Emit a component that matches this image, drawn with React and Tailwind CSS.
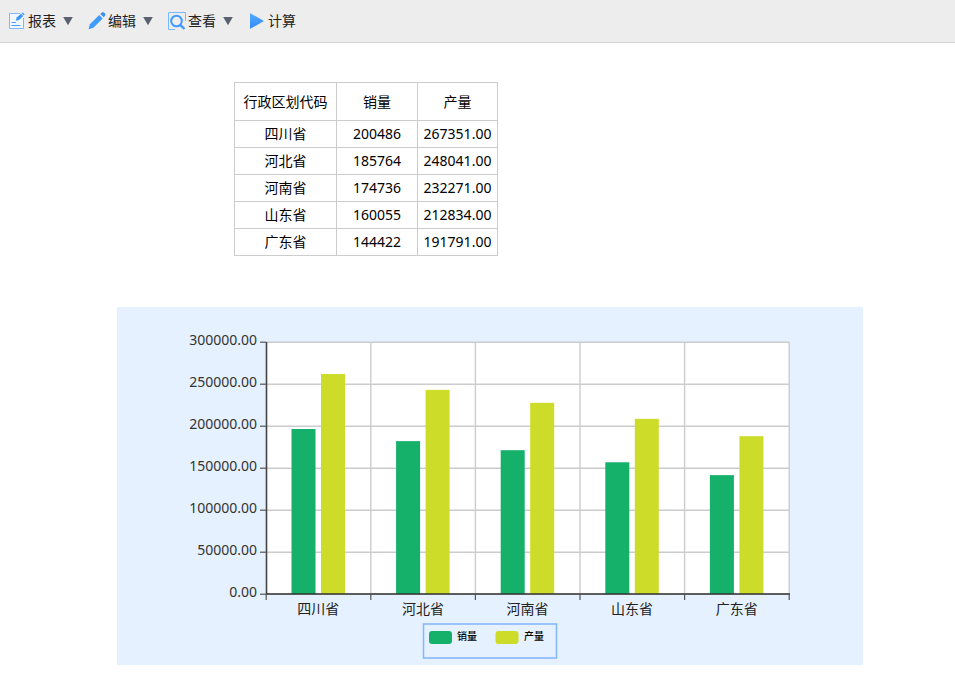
const rows = [
  { name: '四川省', sales: 200486, output: 267351 },
  { name: '河北省', sales: 185764, output: 248041 },
  { name: '河南省', sales: 174736, output: 232271 },
  { name: '山东省', sales: 160055, output: 212834 },
  { name: '广东省', sales: 144422, output: 191791 },
];

const ticks = [300000, 250000, 200000, 150000, 100000, 50000, 0];

// Plot area inside the 746x358 chart canvas
const plot = { left: 149, right: 672, top: 35, bottom: 287 };
const colWidth = (plot.right - plot.left) / rows.length;
const barScale = 0.000823;

function ReportIcon() {
  return (
    <svg width="18" height="18" viewBox="0 0 18 18" fill="none" aria-hidden="true">
      <path d="M12 1.500H1.500v15h14V6" fill="#f3f8fe" stroke="#7ab9ff" />
      <path d="M3.500 10.500H8M3.500 13.500h9" stroke="#4a9dfb" />
      <path d="M7.800 8.800l.8-3.200L13 1.800l2.200 2.200L11 8z" fill="#3c97fb" />
      <path d="M13.700 1.200l1-.8 1.900 1.900-.9.900z" fill="#4a8fe6" />
    </svg>
  );
}

function EditIcon() {
  return (
    <svg width="18" height="18" viewBox="0 0 18 18" aria-hidden="true">
      <path d="M.5 17.200l1.400-5L11.200 3l3.500 3.500-9.300 9.200z" fill="#3f9bff" />
      <path d="M12.300 2l1.500-1.400c.7-.6 1.500-.6 2.200 0l1 1c.6.700.6 1.500 0 2.200l-1.300 1.500z" fill="#3f8ff0" />
    </svg>
  );
}

function ViewIcon() {
  return (
    <svg width="18" height="18" viewBox="0 0 18 18" fill="none" aria-hidden="true">
      <path d="M7 17.500H.5V.5h17V9" stroke="#7ab9ff" />
      <circle cx="8.500" cy="9" r="5.300" stroke="#3f9bff" strokeWidth="2" />
      <path d="M12.200 12.800l4.300 4.200" stroke="#3f9bff" strokeWidth="2.400" />
    </svg>
  );
}

function CalcIcon() {
  return (
    <svg width="18" height="18" viewBox="0 0 18 18" aria-hidden="true">
      <defs>
        <linearGradient id="play" x1="0" y1="0" x2="0" y2="1">
          <stop offset="0" stopColor="#57a9ff" />
          <stop offset="1" stopColor="#2f8cf8" />
        </linearGradient>
      </defs>
      <path d="M2 1.800v14.400q0 .8.700.4L15.200 9.500q.6-.5 0-1L2.700 1.400Q2 1 2 1.800z" fill="url(#play)" />
    </svg>
  );
}

const menus = [
  { label: '报表', icon: <ReportIcon />, arrow: true },
  { label: '编辑', icon: <EditIcon />, arrow: true },
  { label: '查看', icon: <ViewIcon />, arrow: true },
  { label: '计算', icon: <CalcIcon />, arrow: false },
];

function Toolbar() {
  return (
    <header className="flex h-[43px] items-center border-b border-[#d5d5d5] bg-[#ededed] pl-2">
      {menus.map((m) => (
        <button key={m.label} type="button" className="flex w-20 items-center gap-0.5 text-[#222]">
          {m.icon}
          <span>{m.label}</span>
          {m.arrow && (
            <svg className="ml-1" width="12" height="10" viewBox="0 0 12 10" aria-hidden="true">
              <path d="M1.200 1h9.600L6 9.300z" fill="#5a6270" />
            </svg>
          )}
        </button>
      ))}
    </header>
  );
}

function DataTable() {
  return (
    <table className="ml-[234px] mt-[39px] w-[264px] table-fixed border-collapse text-center text-black [&_td]:border [&_td]:border-[#ccc] [&_th]:border [&_th]:border-[#ccc] [&_th]:font-normal">
      <thead>
        <tr className="h-[38px]">
          <th className="w-[102px]">行政区划代码</th>
          <th className="w-[81px]">销量</th>
          <th className="w-20">产量</th>
        </tr>
      </thead>
      <tbody>
        {rows.map((r) => (
          <tr key={r.name} className="h-[27px]">
            <td>{r.name}</td>
            <td>{r.sales}</td>
            <td>{r.output.toFixed(2)}</td>
          </tr>
        ))}
      </tbody>
    </table>
  );
}

function Bar({ x, value, fill }) {
  const h = value * barScale;
  return <rect x={x} y={plot.bottom - h} width="24" height={h} fill={fill} />;
}

function Chart() {
  const tickY = (t) => plot.bottom - (t / 300000) * (plot.bottom - plot.top);

  return (
    <svg viewBox="0 0 746 358" className="block w-full bg-[#e5f1ff]" role="img" aria-label="销量 / 产量">
      <rect x={plot.left} y={plot.top} width={plot.right - plot.left} height={plot.bottom - plot.top} fill="#fff" />

      {/* grid */}
      {ticks.map((t) => (
        <path key={t} d={`M${plot.left} ${tickY(t) + 0.2}H${plot.right}`} stroke="#ccc" strokeWidth="1.400" />
      ))}
      {rows.map((r, i) => (
        <path
          key={r.name}
          d={`M${plot.left + colWidth * (i + 1) + 0.2} ${plot.top}V${plot.bottom}`}
          stroke="#ccc"
          strokeWidth="1.400"
        />
      ))}

      {/* bars */}
      {rows.map((r, i) => (
        <g key={r.name}>
          <Bar x={plot.left + colWidth * i + 25.5} value={r.sales} fill="#15b069" />
          <Bar x={plot.left + colWidth * i + 55} value={r.output} fill="#cddc28" />
        </g>
      ))}

      {/* axes */}
      <path d={`M${plot.left + 0.5} ${plot.top}V${plot.bottom}`} stroke="#444" strokeWidth="1.600" />
      <path d={`M${plot.left} ${plot.bottom}H${plot.right + 1}`} stroke="#333" strokeWidth="1.600" />
      {ticks.map((t) => (
        <g key={t}>
          <path d={`M${plot.left - 6} ${tickY(t) + 0.2}h6`} stroke="#555" strokeWidth="1.200" />
          <text x="140" y={tickY(t) + 3} textAnchor="end" fill="#333">
            {t.toFixed(2)}
          </text>
        </g>
      ))}
      {[0, 1, 2, 3, 4, 5].map((i) => (
        <path key={i} d={`M${plot.left + colWidth * i + 0.2} ${plot.bottom}v6`} stroke="#555" strokeWidth="1.200" />
      ))}
      {rows.map((r, i) => (
        <text key={r.name} x={plot.left + colWidth * (i + 0.5)} y="307" textAnchor="middle" fill="#222">
          {r.name}
        </text>
      ))}

      {/* legend */}
      <rect x="306.500" y="317" width="133" height="34" fill="none" stroke="#87b8fb" strokeWidth="1.600" />
      <rect x="312" y="324" width="23" height="13" rx="3" fill="#15b069" />
      <text x="340" y="333" className="text-[10px] font-medium" fill="#000">销量</text>
      <rect x="378.500" y="324" width="23" height="13" rx="3" fill="#cddc28" />
      <text x="407" y="333" className="text-[10px] font-medium" fill="#000">产量</text>
    </svg>
  );
}

export default function App() {
  return (
    <div className="min-h-screen bg-white font-['Noto_Sans','Noto_Sans_CJK_SC',sans-serif] text-[14px] leading-5">
      <Toolbar />
      <main>
        <DataTable />
        <div className="ml-[117px] mr-[92px] mt-[51px]">
          <Chart />
        </div>
      </main>
    </div>
  );
}
